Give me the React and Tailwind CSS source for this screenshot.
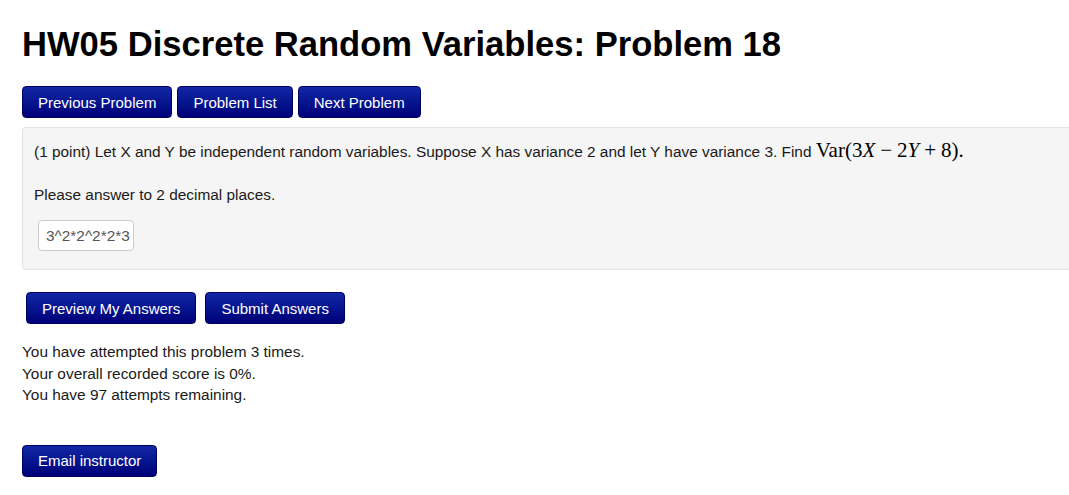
export default function App() {
  const btn =
    "h-[32px] px-[15px] rounded-[4px] border border-[#000060] bg-gradient-to-b from-[#1326a6] to-[#000078] text-white text-[15px] leading-none flex items-center";
  const serif = { fontFamily: '"Liberation Serif", "Times New Roman", serif' };
  return (
    <div className="w-[1069px] h-[495px] overflow-hidden bg-white text-[#1a1a1a]" style={{ fontFamily: '"Liberation Sans", Arial, sans-serif' }}>
      <div className="pl-[22px]">
        <h1 className="pt-[24px] text-[34.6px] font-bold leading-[40px] text-black">
          HW05 Discrete Random Variables: Problem 18
        </h1>
        <div className="mt-[22px] flex gap-[5px]">
          <button className={btn}>Previous Problem</button>
          <button className={btn}>Problem List</button>
          <button className={btn}>Next Problem</button>
        </div>
        <div className="mt-[9px] h-[143px] w-[1060px] rounded-l-[4px] border border-[#e3e3e3] bg-[#f5f5f5] pl-[11px] pt-[11px] text-[15.4px]">
          <p className="leading-[22px] whitespace-nowrap">
            (1 point) Let X and Y be independent random variables. Suppose X has variance 2 and let Y have variance 3. Find{" "}
            <span className="text-[21px] text-black" style={serif}>
              Var(3<i>X</i>
              <span className="px-[5px]">−</span>2<i>Y</i>
              <span className="px-[5px]">+</span>8).
            </span>
          </p>
          <p className="mt-[21px] leading-[22px]">Please answer to 2 decimal places.</p>
          <div className="mt-[14px] ml-[4px] w-[96px] h-[31px] rounded-[4px] border border-[#cccccc] bg-white pl-[7px] flex items-center overflow-hidden whitespace-nowrap text-[15.4px] text-[#555]">
            3^2*2^2*2*3
          </div>
        </div>
        <div className="mt-[22px] ml-[4px] flex gap-[9px]">
          <button className={btn}>Preview My Answers</button>
          <button className={btn}>Submit Answers</button>
        </div>
        <div className="mt-[17px] text-[15.4px] leading-[21.5px]">
          <div>You have attempted this problem 3 times.</div>
          <div>Your overall recorded score is 0%.</div>
          <div>You have 97 attempts remaining.</div>
        </div>
        <div className="mt-[39px] flex">
          <button className={btn}>Email instructor</button>
        </div>
      </div>
    </div>
  );
}
